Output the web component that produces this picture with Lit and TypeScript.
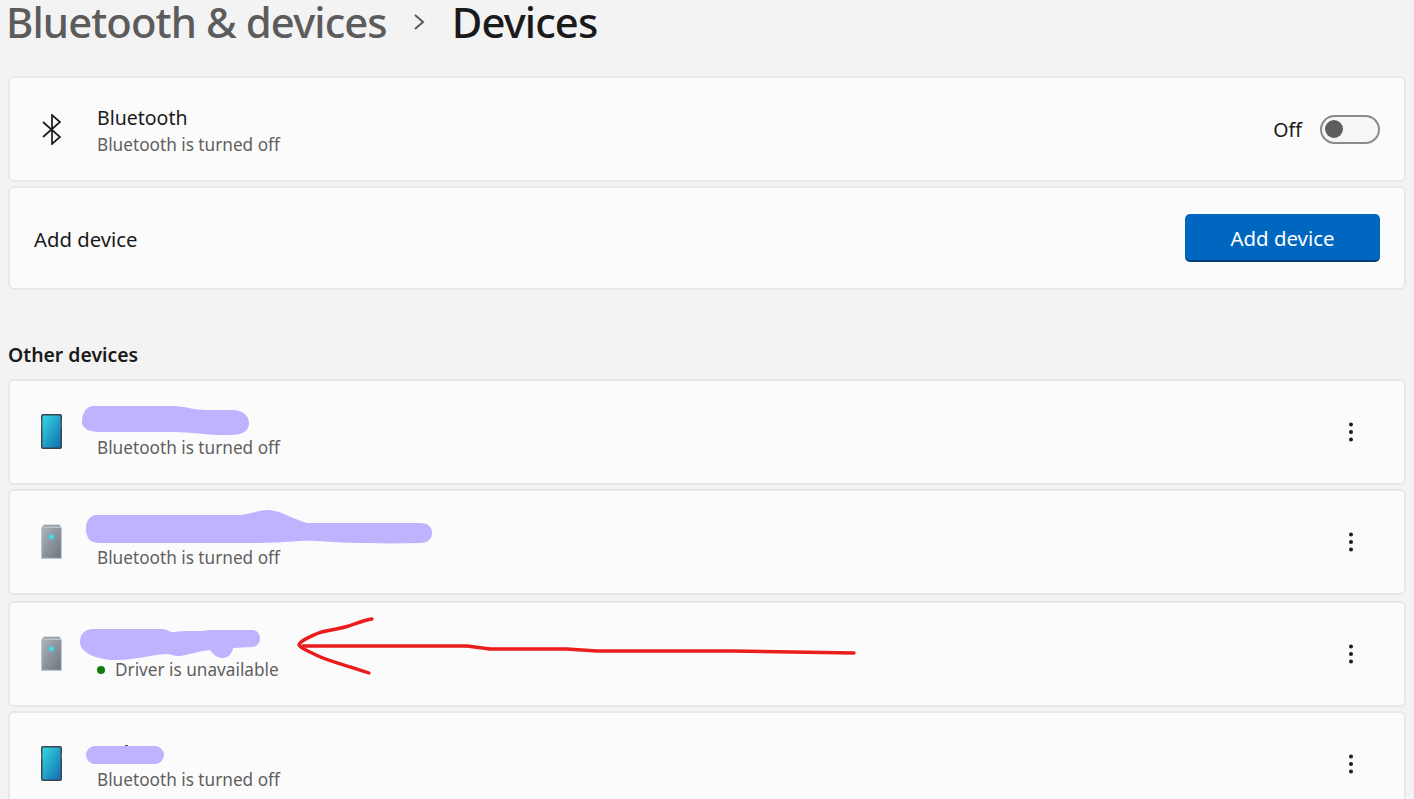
import { LitElement, css, html, svg } from "lit";
import { customElement } from "lit/decorators.js";

interface Device {
  kind: "phone" | "tower";
  status: string;
  warn?: boolean;
  cls: string;
}

const devices: Device[] = [
  { kind: "phone", status: "Bluetooth is turned off", cls: "" },
  { kind: "tower", status: "Bluetooth is turned off", cls: "" },
  { kind: "tower", status: "Driver is unavailable", warn: true, cls: "spaced" },
  { kind: "phone", status: "Bluetooth is turned off", cls: "" },
];

const phoneIcon = html`<svg class="device-icon" width="21" height="35" viewBox="0 0 21 35">
  <defs>
    <linearGradient id="screen" x1="0" y1="0" x2="1" y2="1">
      <stop offset="0" stop-color="#38dbe4" />
      <stop offset="1" stop-color="#0f6aae" />
    </linearGradient>
  </defs>
  <rect x="0.7" y="0.7" width="19.6" height="33.6" rx="1.6" fill="url(#screen)" stroke="#39444f" stroke-width="1.5" />
  <rect x="0" y="7" width="1" height="6" fill="#566270" />
  <rect x="20" y="7" width="1" height="6" fill="#566270" />
</svg>`;

const towerIcon = html`<svg class="device-icon" width="21" height="35" viewBox="0 0 21 35">
  <defs>
    <linearGradient id="body" x1="0" y1="0" x2="1" y2="1">
      <stop offset="0" stop-color="#a9b3bd" />
      <stop offset="1" stop-color="#6d747d" />
    </linearGradient>
    <linearGradient id="cap" x1="0" y1="0" x2="0" y2="1">
      <stop offset="0" stop-color="#8d96a0" />
      <stop offset="1" stop-color="#c3cbd3" />
    </linearGradient>
  </defs>
  <path d="M0 4 2.5 0.5h16L21 4v31H0Z" fill="#bcc5cd" />
  <path d="M0.8 4 3 1h15l2.2 3Z" fill="url(#cap)" />
  <rect x="1.2" y="4" width="18.6" height="29.8" fill="url(#body)" />
  <circle cx="10.5" cy="13" r="3" fill="#2fdfea" opacity="0.4" />
  <circle cx="10.5" cy="13" r="1.9" fill="#2fe6f0" />
</svg>`;

const moreIcon = html`<svg width="6" height="20" viewBox="0 0 6 20">
  <circle cx="3" cy="2.5" r="2" /><circle cx="3" cy="10" r="2" /><circle cx="3" cy="17.5" r="2" />
</svg>`;

// hand-drawn redaction and arrow, on top of the page
const scribbles = svg`
  <g fill="#bdb3ff">
    <path d="M92 406H172C186 406 192 410 206 410H232C243 410 249 416 249 423C249 431 243 435 230 435C214 436 190 432 175 432H100C88 432 82 428 82 422C82 416 84 408 92 406Z" />
    <path d="M95 515H240C252 514 258 510 268 510C280 510 292 519 307 523L420 523C428 523 432 527 432 533C432 539 428 543 420 543C380 544 345 543 317 541C300 540 285 543 260 543H100C92 543 88 540 87 535C85 530 85 517 95 515Z" />
    <path d="M92 629H162C168 629 170 633 174 632C186 630 198 632 210 630H252C257 630 260 634 260 638C260 643 257 647 252 647L233 648C232 654 228 658 222 658C217 658 213 654 210 650C200 651 192 654 180 656C175 657 171 654 167 654C150 655 135 660 117 660C95 660 80 652 80 642C80 634 84 630 92 629Z" />
    <rect x="86" y="746" width="78" height="18" rx="9" />
  </g>
  <rect x="125" y="745" width="3" height="1" fill="#555" />
  <g fill="none" stroke="#ea1c1c" stroke-linecap="round" stroke-linejoin="round" stroke-width="3.4">
    <path d="M854 653 732 651 597 651 567 649 490 649 467 646 303 646" />
    <path d="M372 619C364 620 355 624 345 627C335 630 325 630 316 634C307 638 300 641 299 645C300 648 306 650 316 655C330 662 350 666 369 673" />
  </g>`;

@customElement("app-root")
export class AppRoot extends LitElement {
  static styles = css`
    :host {
      display: block;
      position: relative;
      width: 1414px;
      height: 799px;
      overflow: hidden;
      background: #f3f3f3;
      color: #1a1a1a;
      font-family: "Noto Sans", "Open Sans", sans-serif;
    }
    .page {
      display: flex;
      flex-direction: column;
      padding: 0 8px;
    }
    .crumbs {
      display: flex;
      align-items: center;
      height: 76px;
      padding-bottom: 32px;
      margin-left: -2px;
      box-sizing: border-box;
      font-size: 41.8px;
      line-height: 44px;
      font-weight: 500;
      letter-spacing: -0.9px;
      white-space: nowrap;
    }
    .crumbs .parent {
      color: #5c5c5c;
    }
    .crumbs svg {
      margin: 0 25px 0 26px;
    }
    .cards {
      display: flex;
      flex-direction: column;
      gap: 4px;
    }
    .card {
      display: flex;
      align-items: center;
      box-sizing: border-box;
      height: 106px;
      padding: 0 24px 0 31px;
      background: #fbfbfb;
      border: 2px solid #e8e8e8;
      border-radius: 6px;
    }
    .card.short {
      height: 104px;
      padding-left: 24px;
    }
    .card.spaced {
      margin-top: 2px;
    }
    .lead {
      flex: none;
      width: 21px;
      margin-right: 35px;
      display: flex;
      justify-content: center;
    }
    .device-icon {
      display: block;
      margin-bottom: 2px;
    }
    .text {
      flex: 1;
      display: flex;
      flex-direction: column;
      padding-top: 4px;
    }
    .name {
      font-size: 19.5px;
      line-height: 26px;
      height: 26px;
    }
    .sub {
      display: flex;
      align-items: center;
      margin-top: 1px;
      font-size: 17.2px;
      line-height: 25px;
      color: #5f5f5f;
    }
    .dot {
      width: 8px;
      height: 8px;
      margin: 0 10px 0 0;
      border-radius: 50%;
      background: #107c10;
    }
    .label {
      flex: 1;
      padding-top: 1px;
      font-size: 20.3px;
    }
    .state {
      font-size: 19.5px;
      margin-right: 18px;
    }
    .toggle {
      box-sizing: border-box;
      display: flex;
      align-items: center;
      width: 60px;
      height: 29px;
      padding-left: 3px;
      background: #f6f6f6;
      border: 2px solid #8a8a8a;
      border-radius: 15px;
    }
    .toggle i {
      width: 18px;
      height: 18px;
      border-radius: 50%;
      background: #5d5d5d;
    }
    .btn {
      box-sizing: border-box;
      width: 195px;
      height: 48px;
      padding: 1px 0 0;
      color: #fff;
      font: inherit;
      font-size: 20.4px;
      background: #0067c0;
      border: none;
      border-bottom: 2px solid #003e73;
      border-radius: 5px;
    }
    .more {
      display: flex;
      margin-right: 26px;
      fill: #1a1a1a;
    }
    h2 {
      margin: 51px 0 10px;
      font-size: 19.4px;
      line-height: 28px;
      font-weight: 600;
    }
    .overlay {
      position: absolute;
      left: 0;
      top: 0;
      pointer-events: none;
    }
  `;

  render() {
    return html`
      <div class="page">
        <div class="crumbs">
          <span class="parent">Bluetooth &amp; devices</span>
          <svg width="14" height="18" viewBox="0 0 14 18" fill="none" stroke="#5c5c5c" stroke-width="2">
            <path d="M2 2l8 7-8 7" />
          </svg>
          <span>Devices</span>
        </div>
        <div class="cards">
          <div class="card">
            <div class="lead">
              <svg width="19" height="31" viewBox="0 0 19 31" fill="none" stroke="#1a1a1a" stroke-width="1.7">
                <path d="M1 8l17 15-8 7V1l8 7L1 23" />
              </svg>
            </div>
            <div class="text">
              <div class="name">Bluetooth</div>
              <div class="sub">Bluetooth is turned off</div>
            </div>
            <span class="state">Off</span>
            <div class="toggle"><i></i></div>
          </div>
          <div class="card short">
            <span class="label">Add device</span>
            <button class="btn">Add device</button>
          </div>
        </div>
        <h2>Other devices</h2>
        <div class="cards">
          ${devices.map(
            (d) => html`
              <div class="card ${d.cls}">
                <div class="lead">${d.kind === "phone" ? phoneIcon : towerIcon}</div>
                <div class="text">
                  <div class="name"></div>
                  <div class="sub">
                    ${d.warn ? html`<span class="dot"></span>` : ""}${d.status}
                  </div>
                </div>
                <span class="more">${moreIcon}</span>
              </div>
            `
          )}
        </div>
      </div>
      <svg class="overlay" width="1414" height="799" viewBox="0 0 1414 799">${scribbles}</svg>
    `;
  }
}
